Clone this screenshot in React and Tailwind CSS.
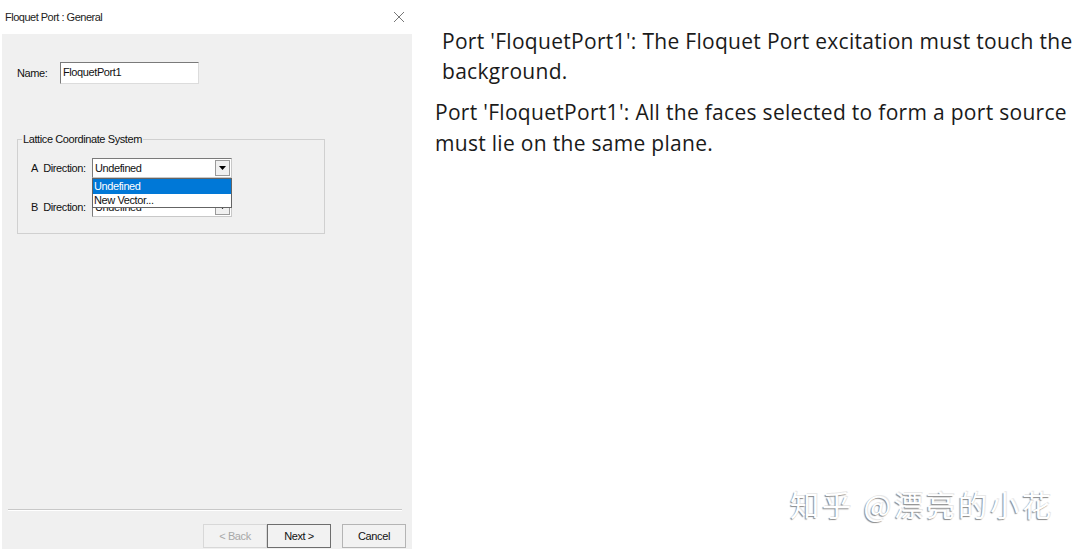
export default function App() {
  const dlg = { fontFamily: '"Liberation Sans", Arial, sans-serif' };
  return (
    <div className="w-[1080px] h-[549px] bg-white flex overflow-hidden">
      {/* Dialog */}
      <div className="w-[412px] h-full flex flex-col shrink-0" style={dlg}>
        <div className="h-[34px] flex items-center justify-between pl-[5px] pr-[6px] bg-white">
          <span className="text-[11px] tracking-[-0.5px] text-[#222]">Floquet Port : General</span>
          <svg width="12" height="12" viewBox="0 0 12 12" className="mr-[1px]">
            <path d="M1 1 L11 11 M11 1 L1 11" stroke="#777" strokeWidth="1" fill="none" />
          </svg>
        </div>
        <div className="flex-1 ml-[2px] bg-[#f0f0f0] flex flex-col text-[11px] tracking-[-0.4px] text-[#111]">
          <div className="flex items-center mt-[28px] ml-[15px]">
            <span className="w-[43px]">Name:</span>
            <div className="w-[139px] h-[22px] bg-white border border-[#7a7a7a] border-r-[#dcdcdc] border-b-[#dcdcdc] px-[2px] pt-[2px] leading-[14px]">
              FloquetPort1
            </div>
          </div>

          <div className="relative mt-[55px] ml-[15px] w-[308px] h-[95px] border border-[#d0d0d0]">
            <span className="absolute -top-[8px] left-[4px] px-[1px] bg-[#f0f0f0] leading-[14px]">
              Lattice Coordinate System
            </span>
            <div className="flex items-center mt-[18px] ml-[13px]">
              <span className="w-[61px]">A&nbsp; Direction:</span>
              <div className="relative">
                <Combo text="Undefined" />
                <div className="absolute left-0 top-[20px] w-[140px] bg-white border border-[#646464] z-10 text-[11px]">
                  <div className="h-[15px] bg-[#0078d7] text-white pl-[1px] leading-[15px]">Undefined</div>
                  <div className="h-[13px] pl-[1px] leading-[12px]">New Vector...</div>
                </div>
              </div>
            </div>
            <div className="flex items-center mt-[19px] ml-[13px]">
              <span className="w-[61px]">B&nbsp; Direction:</span>
              <Combo text="Undefined" />
            </div>
          </div>

          <div className="flex-1" />
          <div className="mx-[6px] h-[2px] border-t border-[#c8c8c8] border-b border-b-white w-[394px]" />
          <div className="flex justify-end mt-[13px] mb-[1px] pr-[6px]">
            <button className="w-[64px] h-[24px] border border-[#d8d8d8] bg-[#f2f2f2] text-[#a8a8a8] text-[11px]">&lt; Back</button>
            <button className="w-[64px] h-[24px] border border-[#6e6e6e] bg-[#f2f2f2] text-[#111] text-[11px]">Next &gt;</button>
            <button className="ml-[11px] w-[64px] h-[24px] border border-[#b4b4b4] bg-[#f2f2f2] text-[#111] text-[11px]">Cancel</button>
          </div>
        </div>
      </div>

      {/* Messages */}
      <div className="flex-1 relative pt-[26px] text-[21px] text-[#1a1a1a]" style={{ fontFamily: '"Open Sans", "Noto Sans", sans-serif' }}>
        <p className="ml-[30px] leading-[30px] tracking-[0.3px] whitespace-nowrap">
          Port 'FloquetPort1': The Floquet Port excitation must touch the<br />background.
        </p>
        <p className="ml-[23px] mt-[11px] leading-[31px] tracking-[0.3px] whitespace-nowrap">
          Port 'FloquetPort1': All the faces selected to form a port source<br />must lie on the same plane.
        </p>
        <div
          className="absolute left-[378px] top-[483px] text-[29px] text-white tracking-[3px]"
          style={{
            fontFamily: '"Noto Sans CJK SC", "Noto Sans", sans-serif',
            textShadow: '-1px 1px 1px #8a8a8a, 1px -1px 0 #e8e8e8',
          }}
        >
          知乎 @漂亮的小花
        </div>
      </div>
    </div>
  );
}

function Combo({ text }) {
  return (
    <div className="w-[140px] h-[20px] bg-white border border-[#7a7a7a] border-r-[#c8c8c8] border-b-[#c8c8c8] flex items-center justify-between pl-[2px]">
      <span className="text-[11px]">{text}</span>
      <div className="w-[15px] h-[16px] mr-[1px] bg-[#f0f0f0] border border-[#9a9a9a] flex items-center justify-center">
        <svg width="7" height="4" viewBox="0 0 7 4"><path d="M0 0 L7 0 L3.5 4 Z" fill="#000" /></svg>
      </div>
    </div>
  );
}
